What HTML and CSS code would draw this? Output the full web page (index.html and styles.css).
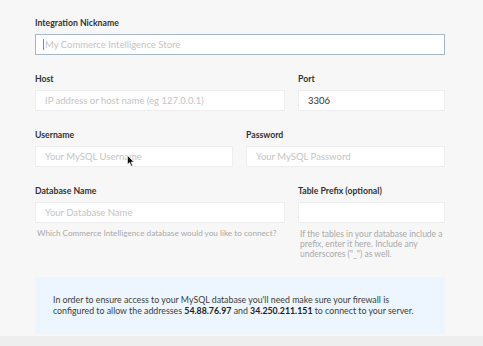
FILE: index.html
```html
<!DOCTYPE html>
<html>
<head>
<meta charset="utf-8">
<link rel="stylesheet" href="styles.css">
</head>
<body>
<div class="page">
  <form class="form">
    <div class="field">
      <label class="label">Integration Nickname</label>
      <div class="input focused"><span class="caret"></span><span class="ph">My Commerce Intelligence Store</span></div>
    </div>
    <div class="row row-a">
      <div class="field">
        <label class="label">Host</label>
        <div class="input"><span class="ph">IP address or host name (eg 127.0.0.1)</span></div>
      </div>
      <div class="field">
        <label class="label">Port</label>
        <div class="input"><span class="val">3306</span></div>
      </div>
    </div>
    <div class="row row-b">
      <div class="field">
        <label class="label">Username</label>
        <div class="input"><span class="ph">Your MySQL Username</span>
          <svg class="cursor" width="8" height="12" viewBox="0 0 8 12"><path d="M0.5 0.5 L0.5 9.5 L2.6 7.6 L4.2 11.2 L5.6 10.6 L4.1 7.1 L7 7.1 Z" fill="#111" stroke="#fff" stroke-width="0.6"/></svg>
        </div>
      </div>
      <div class="field">
        <label class="label">Password</label>
        <div class="input"><span class="ph">Your MySQL Password</span></div>
      </div>
    </div>
    <div class="row row-a">
      <div class="field">
        <label class="label">Database Name</label>
        <div class="input"><span class="ph">Your Database Name</span></div>
        <p class="help">Which Commerce Intelligence database would you like to connect?</p>
      </div>
      <div class="field">
        <label class="label">Table Prefix (optional)</label>
        <div class="input"></div>
        <p class="help help-r">If the tables in your database include a prefix, enter it here. Include any underscores ("_") as well.</p>
      </div>
    </div>
    <div class="notice">
      <p class="notice-text">In order to ensure access to your MySQL database you'll need make sure your firewall is<br>configured to allow the addresses <b>54.88.76.97</b> and <b>34.250.211.151</b> to connect to your server.</p>
    </div>
  </form>
</div>
<div class="band"></div>
</body>
</html>
```
FILE: styles.css
```css
html, body {
  margin: 0;
  padding: 0;
  background: #f7f7f7;
}
body {
  font-family: Lato, "Noto Sans", sans-serif;
  width: 483px;
  height: 346px;
  overflow: hidden;
}
.page {
  height: 336px;
  box-sizing: border-box;
  padding: 17px 38px 0 35px;
}
.form {
  width: 410px;
  display: flex;
  flex-direction: column;
}
.field {
  display: flex;
  flex-direction: column;
  min-width: 0;
}
.form > .field, .row {
  margin-bottom: 18px;
}
.row {
  display: grid;
  column-gap: 13px;
}
.row-a { grid-template-columns: 250px 1fr; }
.row-b { grid-template-columns: 198px 1fr; }
.label {
  font-size: 8.7px;
  line-height: 11px;
  font-weight: 700;
  color: #333;
  margin-bottom: 6px;
}
.input {
  position: relative;
  height: 21px;
  box-sizing: border-box;
  background: #fff;
  border: 1px solid #eeeeee;
  display: flex;
  align-items: center;
  padding-left: 9px;
  font-size: 9.5px;
}
.input.focused {
  border: 1.5px solid #a5b8c7;
  padding-left: 7px;
}
.caret {
  width: 1px;
  height: 11px;
  background: #888;
  margin-right: 1px;
}
.ph { color: #c4c4c4; white-space: nowrap; }
.val { color: #333; font-size: 9.5px; }
.cursor {
  position: absolute;
  left: 91px;
  top: 8px;
}
.help {
  margin: 5px 0 0 2px;
  font-size: 8.2px;
  line-height: 10.3px;
  color: #a9a9a9;
  white-space: nowrap;
}
.help-r {
  margin-top: 6px;
  font-size: 8.5px;
  line-height: 10px;
  white-space: normal;
}
.notice {
  height: 57px;
  box-sizing: border-box;
  background: #edf6fe;
  padding: 0 18px;
  display: flex;
  align-items: center;
}
.notice-text {
  margin: 0;
  font-size: 8.8px;
  line-height: 10.8px;
  color: #3c3c3c;
}
.notice-text b { color: #222; font-weight: 700; }
.band {
  height: 10px;
  background: #eeeeee;
}
```
